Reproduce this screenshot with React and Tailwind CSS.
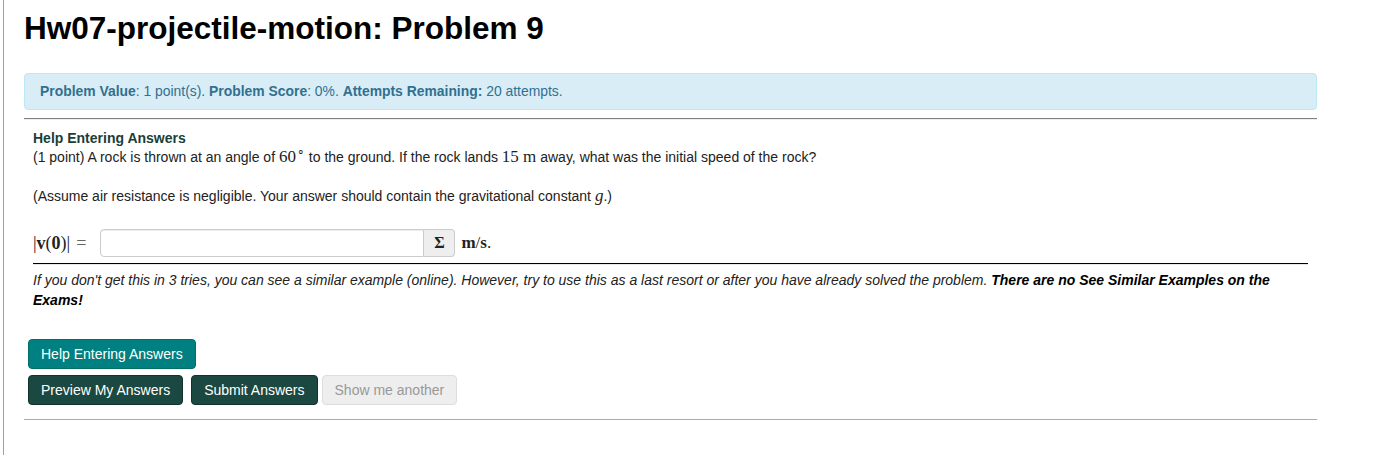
export default function App() {
  return (
    <div className="min-h-[455px] bg-white font-['Liberation_Sans',Arial,sans-serif] text-[14px] text-[#333]">
      <div className="ml-[3px] min-h-[455px] border-l border-[#a0a0a0] pl-[20px] pr-[74px] pt-[10px]">
        <h1 className="text-[31.5px] font-bold leading-[36px] text-black">Hw07-projectile-motion: Problem 9</h1>

        <div className="mt-[27px] rounded-[4px] border border-[#bce8f1] bg-[#d9edf7] px-[15px] py-[9px] leading-[17px] text-[13.9px] text-[#31708f]">
          <b>Problem Value</b>: 1 point(s). <b>Problem Score</b>: 0%. <b>Attempts Remaining:</b> 20 attempts.
        </div>

        <div className="mt-[8px] border-t border-[#808080] shadow-[0_1px_0_#eee]" />

        <div className="px-[9px] pt-[10px]">
          <div className="font-bold leading-[18px] text-[#1c3d38]">Help Entering Answers</div>
          <div className="leading-[20px] text-[#222]">
            (1 point) A rock is thrown at an angle of{' '}
            <span className="font-['Liberation_Serif',serif] text-[17px]">60<sup className="ml-[1px] text-[12px]">∘</sup></span>{' '}
            to the ground. If the rock lands{' '}
            <span className="font-['Liberation_Serif',serif] text-[17px]">15 m</span> away, what was the initial speed of the rock?
          </div>
          <div className="mt-[19px] leading-[20px] text-[#222]">
            (Assume air resistance is negligible. Your answer should contain the gravitational constant{' '}
            <i className="font-['Liberation_Serif',serif] text-[17px]">g</i>.)
          </div>

          <div className="mt-[23px] flex items-center">
            <span className="font-['Liberation_Serif',serif] text-[18px] text-[#222]">
              |<b>v</b>(<b>0</b>)|<span className="ml-[6px] text-[#666]">=</span>
            </span>
            <div className="ml-[14px] flex h-[28px]">
              <div className="w-[324px] rounded-l-[4px] border border-[#ccc] bg-white shadow-[inset_0_1px_1px_rgba(0,0,0,0.075)]" />
              <div className="flex w-[31px] items-center justify-center rounded-r-[4px] border border-l-0 border-[#ccc] bg-[#eee] font-['Liberation_Serif',serif] text-[16px] font-bold text-[#222]">Σ</div>
            </div>
            <span className="ml-[6px] font-['Liberation_Serif',serif] text-[17px] text-[#222]">
              <b>m</b>/<b>s</b>.
            </span>
          </div>

          <div className="mt-[6px] border-t border-black shadow-[0_1px_0_#e8e8e8]" />

          <p className="pt-[6px] italic leading-[20px] text-[#222]">
            If you don't get this in 3 tries, you can see a similar example (online). However, try to use this as a last resort or after you have already solved the problem.{' '}
            <b className="text-black">There are no See Similar Examples on the Exams!</b>
          </p>
        </div>

        <div className="mt-[29px] flex flex-col gap-[6px] pl-[4px]">
          <div>
            <button className="h-[30px] rounded-[4px] border border-[#006e6b] bg-[#008080] px-[12px] text-[14px] text-white">Help Entering Answers</button>
          </div>
          <div className="flex gap-[4px]">
            <button className="h-[30px] rounded-[4px] border border-[#12332d] bg-[#1b4840] px-[12px] text-[14px] text-white">Preview My Answers</button>
            <button className="ml-[4px] h-[30px] rounded-[4px] border border-[#12332d] bg-[#1b4840] px-[12px] text-[14px] text-white">Submit Answers</button>
            <button className="h-[30px] rounded-[4px] border border-[#ddd] bg-[#eee] px-[12px] text-[14px] text-[#999]">Show me another</button>
          </div>
        </div>

        <div className="mt-[14px] border-t border-[#aaa]" />
      </div>
    </div>
  );
}
